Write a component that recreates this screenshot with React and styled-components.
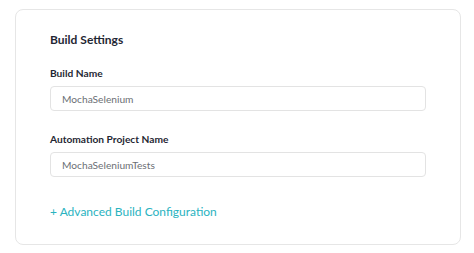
import styled, { createGlobalStyle } from 'styled-components';

const GlobalStyle = createGlobalStyle`
  html, body {
    margin: 0;
    padding: 0;
    background: #ffffff;
  }
  body {
    font-family: Lato, "Open Sans", sans-serif;
  }
`;

const Page = styled.div`
  padding: 9px 13px 10px 15px;
`;

const Card = styled.section`
  border: 1px solid #e6e6e6;
  border-radius: 8px;
  padding: 22px 34px 22px 34px;
  height: 190px;
  box-sizing: content-box;
  display: flex;
  flex-direction: column;
`;

const Title = styled.h2`
  margin: 0 0 18px;
  font-size: 12px;
  font-weight: 700;
  color: #1f2733;
  line-height: 16px;
`;

const Field = styled.div`
  display: flex;
  flex-direction: column;
  gap: 6px;
  margin-bottom: ${(p) => p.$mb || 0}px;
`;

const Label = styled.label`
  font-size: 10.2px;
  font-weight: 700;
  color: #1f2733;
  line-height: 14px;
`;

const Input = styled.input`
  width: 376px;
  height: 25px;
  box-sizing: border-box;
  border: 1px solid #e3e3e3;
  border-radius: 4px;
  padding: 0 11px;
  font-family: Lato, "Open Sans", sans-serif;
  font-size: 10.2px;
  color: #6b6f75;
  background: #fff;
  outline: none;
`;

const AdvancedLink = styled.a`
  margin-top: 27px;
  font-size: 12px;
  color: #2ab3bf;
  text-decoration: none;
  cursor: pointer;
  line-height: 16px;
`;

export default function App() {
  return (
    <>
      <GlobalStyle />
      <Page>
        <Card>
          <Title>Build Settings</Title>
          <Field $mb={21}>
            <Label>Build Name</Label>
            <Input defaultValue="MochaSelenium" readOnly />
          </Field>
          <Field>
            <Label>Automation Project Name</Label>
            <Input defaultValue="MochaSeleniumTests" readOnly />
          </Field>
          <AdvancedLink>+ Advanced Build Configuration</AdvancedLink>
        </Card>
      </Page>
    </>
  );
}
